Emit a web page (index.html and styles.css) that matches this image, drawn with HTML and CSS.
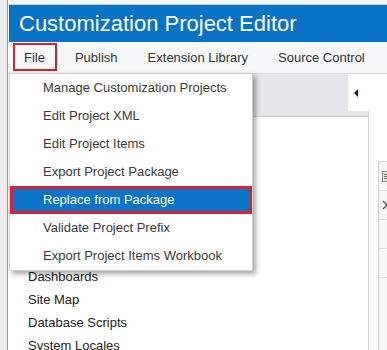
FILE: index.html
```html
<!DOCTYPE html>
<html>
<head>
<meta charset="utf-8">
<link rel="stylesheet" href="styles.css">
</head>
<body>
<div class="side"></div>
<div class="main">
  <div class="top-strip"></div>
  <div class="header">Customization Project Editor</div>
  <div class="menubar">
    <div class="menu-item active">File</div>
    <div class="menu-item">Publish</div>
    <div class="menu-item">Extension Library</div>
    <div class="menu-item">Source Control</div>
  </div>
  <div class="content">
    <div class="left-panel">
      <div class="toolbar">
        <div class="toolbar-fill"></div>
        <div class="collapse-btn"><span class="tri"></span></div>
      </div>
      <ul class="tree">
        <li>Screens</li>
        <li>Data Access</li>
        <li>Code</li>
        <li>Files</li>
        <li>Generic Inquiries</li>
        <li>Reports</li>
        <li>Dashboards</li>
        <li>Site Map</li>
        <li>Database Scripts</li>
        <li>System Locales</li>
      </ul>
    </div>
    <div class="gap"></div>
    <div class="right-panel">
      <div class="rp-row">
        <svg class="rp-icon" width="8" height="11" viewBox="0 0 8 11"><rect x="0.5" y="0.5" width="7" height="10" fill="#e9e4da" stroke="#8a8a8a"/><line x1="2" y1="3.5" x2="8" y2="3.5" stroke="#6f6f6f"/><line x1="2" y1="5.5" x2="8" y2="5.5" stroke="#6f6f6f"/><line x1="2" y1="7.5" x2="8" y2="7.5" stroke="#6f6f6f"/></svg>
      </div>
      <div class="rp-row">
        <svg class="rp-icon" width="6" height="10" viewBox="0 0 6 10"><polyline points="1,1 5,5 1,9" fill="none" stroke="#555" stroke-width="1.4"/></svg>
      </div>
      <div class="rp-row"></div>
      <div class="rp-row"></div>
    </div>
  </div>
</div>
<div class="dropdown">
  <div class="dd-item">Manage Customization Projects</div>
  <div class="dd-item">Edit Project XML</div>
  <div class="dd-item">Edit Project Items</div>
  <div class="dd-item">Export Project Package</div>
  <div class="dd-item selected">Replace from Package</div>
  <div class="dd-item">Validate Project Prefix</div>
  <div class="dd-item">Export Project Items Workbook</div>
</div>
</body>
</html>
```
FILE: styles.css
```css
html, body {
  margin: 0;
  padding: 0;
  height: 100%;
  background: #fff;
  overflow: hidden;
}
body {
  display: flex;
  font-family: "Liberation Sans", Arial, sans-serif;
  font-size: 13px;
}
.side {
  width: 7px;
  flex: 0 0 7px;
  background: #ebebeb;
  border-right: 1px solid #9c9c9c;
}
.main {
  flex: 1;
  margin-left: 1px;
  display: flex;
  flex-direction: column;
  min-width: 0;
  min-height: 0;
}
.top-strip {
  flex: 0 0 auto;
  height: 4px;
  background: #f4f4f4;
  border-bottom: 1px solid #c6c9cc;
}
.header {
  flex: 0 0 auto;
  height: 37px;
  background: #0872c4;
  color: #fff;
  font-size: 22px;
  line-height: 37px;
  padding-left: 10px;
  white-space: nowrap;
}
.menubar {
  flex: 0 0 auto;
  height: 31px;
  background: #f6f7f8;
  border-bottom: 1px solid #d7d9dc;
  display: flex;
  align-items: center;
}
.menu-item {
  position: relative;
  padding: 0 15px;
  line-height: 31px;
  color: #333;
  white-space: nowrap;
}
.menu-item.active::after {
  content: "";
  position: absolute;
  top: 1px;
  bottom: 2px;
  left: 4px;
  right: 3px;
  border: 2px solid #d6202e;
}
.content {
  flex: 1 1 auto;
  min-height: 0;
  overflow: hidden;
  display: flex;
  align-items: flex-start;
}
.left-panel {
  width: 359px;
  flex: 0 0 359px;
  align-self: stretch;
  border-right: 1px solid #d4d6d9;
}
.toolbar {
  height: 42px;
  background: #e4e6e9;
  border-bottom: 1px solid #c9cbce;
  display: flex;
  align-items: flex-start;
}
.toolbar-fill {
  flex: 1;
}
.collapse-btn {
  width: 21px;
  height: 37px;
  margin-right: -1px;
  background: #fff;
  display: flex;
  align-items: center;
  padding-left: 6px;
  box-sizing: border-box;
}
.tri {
  width: 0;
  height: 0;
  border-top: 4px solid transparent;
  border-bottom: 4px solid transparent;
  border-right: 4px solid #17233b;
}
.tree {
  list-style: none;
  margin: 0;
  padding: 10px 0 0 19px;
}
.tree li {
  height: 23px;
  line-height: 23px;
  color: #222;
  white-space: nowrap;
}
.gap {
  width: 9px;
  flex: 0 0 9px;
}
.right-panel {
  flex: 1;
  align-self: stretch;
  margin-top: 87px;
  border-left: 1px solid #cfd1d4;
  border-top: 1px solid #dcdcdc;
  background: #f6f6f6;
}
.rp-row {
  height: 28px;
  border-bottom: 1px solid #dcdcdc;
  display: flex;
  align-items: center;
  padding-left: 3px;
}
.rp-icon {
  display: block;
}
.dropdown {
  position: absolute;
  left: 9px;
  top: 73px;
  width: 242px;
  background: #fff;
  border: 1px solid #cfcfcf;
  box-shadow: 3px 3px 5px rgba(0, 0, 0, 0.35);
}
.dd-item {
  height: 28px;
  line-height: 28px;
  padding-left: 33px;
  color: #3a3a3a;
  white-space: nowrap;
}
.dd-item.selected {
  background: #0a74c9;
  color: #fff;
  box-shadow: inset 0 0 0 3px #d42434;
}
```
